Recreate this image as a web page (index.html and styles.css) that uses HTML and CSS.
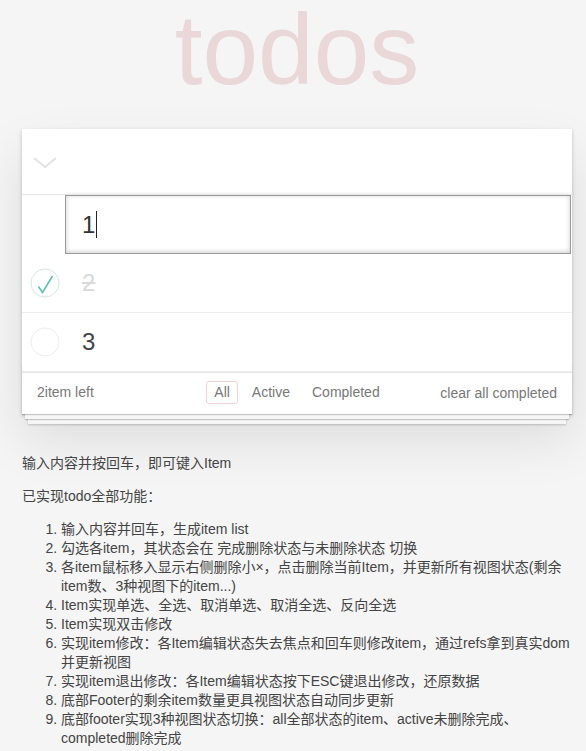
FILE: index.html
```html
<!DOCTYPE html>
<html lang="zh-CN">
<head>
    <meta charset="UTF-8">
    <meta name="viewport" content="width=device-width, initial-scale=1.0">
    <title>todos</title>
    <link rel="stylesheet" href="styles.css">
</head>
<body>
    <div class="page">
        <h1 class="title">todos</h1>
        <section class="todoapp">
            <header class="todo-header">
                <label class="toggle-all" for="toggleAll">
                    <svg width="24" height="12" viewBox="0 0 24 12"><polyline points="1,1 12,10 23,1" fill="none" stroke="#e2e2e2" stroke-width="2"/></svg>
                </label>
                <input id="newTodo" class="new-todo" type="text">
            </header>
            <ul class="todo-list">
                <li class="todo editing">
                    <div class="edit">1<span class="caret"></span></div>
                </li>
                <li class="todo completed">
                    <span class="check">
                        <svg width="30" height="30" viewBox="0 0 30 30"><circle cx="15" cy="15" r="14" fill="none" stroke="#d3e7e3" stroke-width="1"/><polyline points="8.5,18.5 12.5,24.5 22.5,8" fill="none" stroke="#5dc2af" stroke-width="1.6"/></svg>
                    </span>
                    <span class="todo-text">2</span>
                </li>
                <li class="todo">
                    <span class="check">
                        <svg width="30" height="30" viewBox="0 0 30 30"><circle cx="15" cy="15" r="14" fill="none" stroke="#ededed" stroke-width="1"/></svg>
                    </span>
                    <span class="todo-text">3</span>
                </li>
            </ul>
            <footer class="todo-footer">
                <span class="todo-count">2item left</span>
                <ul class="filters">
                    <li><a class="selected" href="#/">All</a></li>
                    <li><a href="#/active">Active</a></li>
                    <li><a href="#/completed">Completed</a></li>
                </ul>
                <button type="button" class="clear-completed">clear all completed</button>
            </footer>
        </section>
        <div class="notes">
            <p>输入内容并按回车，即可键入Item</p>
            <p>已实现todo全部功能：</p>
            <ol>
                <li>输入内容并回车，生成item list</li>
                <li>勾选各item，其状态会在 完成删除状态与未删除状态 切换</li>
                <li>各item鼠标移入显示右侧删除小×，点击删除当前Item，并更新所有视图状态(剩余item数、3种视图下的item...)</li>
                <li>Item实现单选、全选、取消单选、取消全选、反向全选</li>
                <li>Item实现双击修改</li>
                <li>实现item修改：各Item编辑状态失去焦点和回车则修改item，通过refs拿到真实dom并更新视图</li>
                <li>实现item退出修改：各Item编辑状态按下ESC键退出修改，还原数据</li>
                <li>底部Footer的剩余item数量更具视图状态自动同步更新</li>
                <li>底部footer实现3种视图状态切换：all全部状态的item、active未删除完成、completed删除完成</li>
            </ol>
        </div>
    </div>
</body>
</html>
```

FILE: styles.css
```css
html {
    overflow: hidden;
}
body {
    margin: 0;
    padding: 0;
    background: #f5f5f5;
    color: #4d4d4d;
    font-family: "Liberation Sans", "Noto Sans CJK SC", sans-serif;
}
.page {
    width: 550px;
    margin-left: 22px;
}
.title {
    margin: -8px 0 22px;
    font-size: 100px;
    line-height: 115px;
    font-weight: normal;
    text-align: center;
    color: rgba(175, 47, 47, 0.15);
}
.todoapp {
    background: #fff;
    box-shadow: 0 2px 4px 0 rgba(0, 0, 0, 0.2), 0 25px 50px 0 rgba(0, 0, 0, 0.1);
}
.todo-header {
    display: flex;
    align-items: center;
}
.toggle-all {
    width: 46px;
    display: flex;
    justify-content: center;
    padding-top: 2px;
}
.new-todo {
    flex: 1;
    box-sizing: border-box;
    height: 65px;
    padding: 16px 16px 16px 14px;
    border: none;
    outline: none;
    font-family: inherit;
    font-size: 24px;
    line-height: 33px;
    background: transparent;
    box-shadow: inset 0 -2px 1px rgba(0, 0, 0, 0.03);
}
.todo-list {
    margin: 0;
    padding: 0;
    list-style: none;
    border-top: 1px solid #e6e6e6;
}
.todo {
    display: flex;
    align-items: center;
    font-size: 24px;
    border-bottom: 1px solid #ededed;
}
.todo.editing {
    border-bottom: none;
}
.edit {
    box-sizing: border-box;
    width: 506px;
    margin-left: 43px;
    padding: 12px 16px;
    line-height: 33px;
    border: 1px solid #999;
    color: #333;
    box-shadow: inset 0 -1px 5px 0 rgba(0, 0, 0, 0.2);
}
.caret {
    display: inline-block;
    width: 1px;
    height: 27px;
    margin-left: 1px;
    vertical-align: -5px;
    background: #222;
}
.check {
    width: 46px;
    display: flex;
    justify-content: center;
}
.todo-text {
    padding: 15px 15px 15px 14px;
    line-height: 28px;
    color: #444;
}
.completed .todo-text {
    color: #d9d9d9;
    text-decoration: line-through;
}
.todo-footer {
    position: relative;
    display: grid;
    grid-template-columns: 1fr auto 1fr;
    align-items: center;
    padding: 8px 15px 10px;
    border-top: 1px solid #e6e6e6;
    color: #777;
    font-size: 14px;
    line-height: 17px;
}
.todo-footer::before {
    content: '';
    position: absolute;
    left: 0;
    right: 0;
    bottom: 0;
    height: 50px;
    overflow: hidden;
    box-shadow: 0 1px 1px rgba(0, 0, 0, 0.2),
                0 8px 0 -3px #f6f6f6,
                0 9px 1px -3px rgba(0, 0, 0, 0.2),
                0 16px 0 -6px #f6f6f6,
                0 17px 2px -6px rgba(0, 0, 0, 0.2);
}
.filters {
    display: flex;
    margin: 0;
    padding: 0;
    list-style: none;
}
.filters a {
    display: block;
    margin: 0 3px;
    padding: 2px 7px;
    color: inherit;
    text-decoration: none;
    border: 1px solid transparent;
    border-radius: 3px;
}
.filters a.selected {
    border-color: rgba(175, 47, 47, 0.2);
}
.clear-completed {
    justify-self: end;
    position: relative;
    top: 1px;
    padding: 0;
    border: none;
    background: none;
    color: inherit;
    font-family: inherit;
    font-size: 14px;
    line-height: 17px;
    cursor: pointer;
}
.notes {
    padding-top: 40px;
    color: #444;
    font-size: 14px;
    line-height: 19px;
}
.notes p {
    margin: 0 0 14px;
}
.notes ol {
    margin: 0;
    padding-left: 39px;
}
```
